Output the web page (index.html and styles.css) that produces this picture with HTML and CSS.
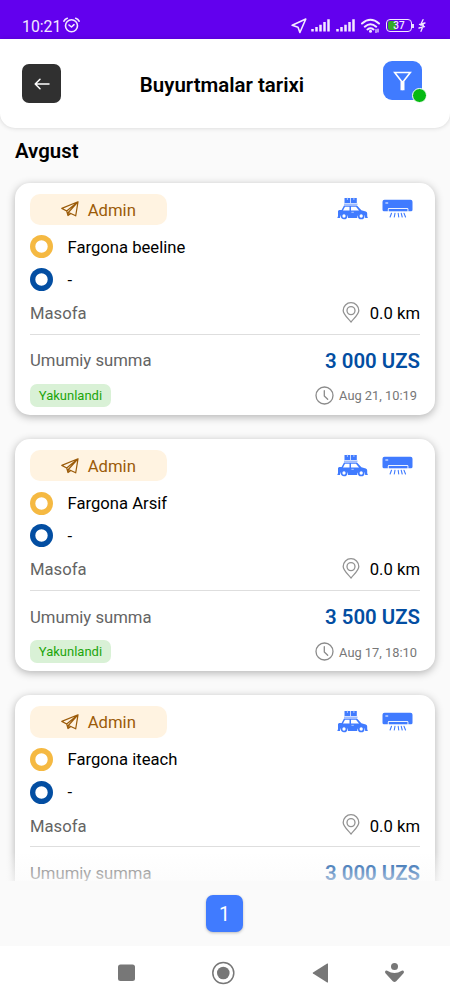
FILE: index.html
```
<!DOCTYPE html>
<html lang="uz">
<head>
<meta charset="utf-8">
<meta name="viewport" content="width=device-width, initial-scale=1">
<title>Buyurtmalar tarixi</title>
<link rel="stylesheet" href="styles.css">
</head>
<body>
<svg class="defs" aria-hidden="true">
  <symbol id="plane" viewBox="0 0 18 16">
    <path d="M.8 7.400 17 .8 14.700 14.800 9.800 12.500 7 14.500 5.700 10ZM17 .8 5.700 10M17 .8 7.300 11.500 7 14.500M7.300 11.500 9.800 12.500"/>
  </symbol>
  <symbol id="car" viewBox="0 0 31 23">
    <path class="solid" d="M7.500 1h5.800v5H7.500ZM14 1h5.800v5H14ZM7 6.800H20.500v.8H7Z"/>
    <path class="solid" fill-rule="evenodd" d="M7 8.500h13l4.400 4.800 4.400 1.200q1.400.5 1.400 2v3.200h.5V21h-2.500a4 4 0 0 0-8 0H11a4 4 0 0 0-8 0H.5v-1.300H1v-5.400q0-1 1.400-1.300h2.200ZM8 9.800l-2 3.600h6.500V9.800Zm6 0v3.600h8L19 9.800Z"/>
    <path class="clasp" d="M10.400 1v1.600M16.900 1v1.600M14.800 15.300h1.600"/>
    <circle class="wheel" cx="7" cy="19" r="2.500"/><circle class="wheel" cx="24.200" cy="19" r="2.500"/>
  </symbol>
  <symbol id="ac" viewBox="0 0 31 20">
    <path class="solid" d="M2.500.8h26q2 0 2 2v8q0 1.500-1.500 1.500h-2.600V10.300q0-1.400-1.400-1.400H7.200Q5.800 8.900 5.800 10.300v2H2Q.5 12.300.5 10.800v-8q0-2 2-2Z"/>
    <path class="solid" d="M6.700 9.900h18.800v2.400H6.700Z"/>
    <path class="cut" d="M3.800 4h2"/>
    <path class="air" d="m9.500 14.200-1.400 3.800M13 14.200l-.7 3.800M16.200 14.200l.5 3.800M19.200 14.200l1 3.800M22 14.200l1.500 3.800"/>
  </symbol>
  <symbol id="pin" viewBox="0 0 18 21">
    <path d="M9 20C6.500 16.600 1.200 12.600 1.200 8.500a7.800 7.800 0 0 1 15.600 0C16.800 12.600 11.500 16.600 9 20Z"/><circle cx="9" cy="8.600" r="4"/>
  </symbol>
  <symbol id="clock" viewBox="0 0 19 19">
    <circle cx="9.500" cy="9.500" r="8.500"/><path d="M9.300 4.700v5.300l3.400 3.300"/>
  </symbol>
  <symbol id="signal" viewBox="0 0 21 15">
    <path d="M1.500 13.500v-2.500M5.500 13.500v-4.500M9.500 13.500V6.700M13.500 13.500V4M17.500 13.500V1.200"/>
  </symbol>
</svg>

<div class="statusbar">
  <span class="time">10:21</span>
  <svg class="alarm" viewBox="0 0 17 16"><circle cx="8.500" cy="8.800" r="6"/><path d="M.9 4.200Q1.900 2 4.300 1.200M16.100 4.200Q15.100 2 12.700 1.200M6 8l2.500 2L11 7.700"/></svg>
  <span class="spacer"></span>
  <svg class="locate" viewBox="0 0 16 16"><path d="M14.800 1 8.900 14.500 7 9.200 1.200 7.300Z"/></svg>
  <svg class="signal"><use href="#signal"/></svg>
  <svg class="signal"><use href="#signal"/></svg>
  <svg class="wifi" viewBox="0 0 20 16"><path d="M1 5.500q8.500-7.500 17 0M3.800 8.700q5.700-5 11.400 0M6.500 11.500q3-2.400 6 0"/><circle cx="9.500" cy="13.300" r="1.500"/><path class="traffic" d="M15 11.500v3M17 11v3"/></svg>
  <span class="battery"><span class="charge"></span><span class="percent">37</span></span>
  <svg class="bolt" viewBox="0 0 8 13"><path d="M5 .7 2.500 6h3L3 12.300M1.500 5.300 7 4M1 9 6.500 7.700"/></svg>
</div>

<header class="appbar">
  <button class="back" aria-label="Orqaga"><svg viewBox="0 0 16 12"><path d="M15 6H1.500M6 1.200 1.200 6 6 10.800"/></svg></button>
  <h1>Buyurtmalar tarixi</h1>
  <button class="filter" aria-label="Filtr"><svg viewBox="0 0 19 20"><path d="M1.700 1.500h15.600L10.700 10v8.500H8.300V10Z"/><path d="M9.500 10.500v8"/></svg><span class="dot"></span></button>
</header>

<main class="list">
  <h2>Avgust</h2>

  <article class="card">
    <div class="top"><span class="chip"><svg><use href="#plane"/></svg>Admin</span><svg class="car"><use href="#car"/></svg><svg class="ac"><use href="#ac"/></svg></div>
    <div class="stop"><i class="ring from"></i>Fargona beeline</div>
    <div class="stop"><i class="ring to"></i>-</div>
    <div class="distance"><span>Masofa</span><svg><use href="#pin"/></svg><b>0.0 km</b></div>
    <div class="total"><span>Umumiy summa</span><strong>3 000 UZS</strong></div>
    <div class="foot"><span class="status">Yakunlandi</span><svg><use href="#clock"/></svg><time>Aug 21, 10:19</time></div>
  </article>

  <article class="card">
    <div class="top"><span class="chip"><svg><use href="#plane"/></svg>Admin</span><svg class="car"><use href="#car"/></svg><svg class="ac"><use href="#ac"/></svg></div>
    <div class="stop"><i class="ring from"></i>Fargona Arsif</div>
    <div class="stop"><i class="ring to"></i>-</div>
    <div class="distance"><span>Masofa</span><svg><use href="#pin"/></svg><b>0.0 km</b></div>
    <div class="total"><span>Umumiy summa</span><strong>3 500 UZS</strong></div>
    <div class="foot"><span class="status">Yakunlandi</span><svg><use href="#clock"/></svg><time>Aug 17, 18:10</time></div>
  </article>

  <article class="card">
    <div class="top"><span class="chip"><svg><use href="#plane"/></svg>Admin</span><svg class="car"><use href="#car"/></svg><svg class="ac"><use href="#ac"/></svg></div>
    <div class="stop"><i class="ring from"></i>Fargona iteach</div>
    <div class="stop"><i class="ring to"></i>-</div>
    <div class="distance"><span>Masofa</span><svg><use href="#pin"/></svg><b>0.0 km</b></div>
    <div class="total"><span>Umumiy summa</span><strong>3 000 UZS</strong></div>
  </article>
  <div class="fade"></div>
</main>

<div class="pager"><button class="page">1</button></div>

<nav class="sysnav">
  <svg viewBox="0 0 450 54">
    <rect x="118" y="18.500" width="17" height="16.500" rx="2.500"/>
    <circle class="outline" cx="223.300" cy="27" r="10.500"/><circle cx="223.300" cy="27" r="6.300"/>
    <path d="M328 18v18q0 .8-.8.4L313 27.600q-.8-.6 0-1.200l14.200-8.800q.8-.4.8.4Z"/>
    <circle cx="394.500" cy="20.500" r="3.500"/>
    <path d="M387.300 24.700q7.200 4.500 14.400 0 1.700-.5 2.200.8.300 1.200-.8 2.300l-6.900 7.500q-1.700 1.500-3.400 0l-6.900-7.500q-1.100-1.100-.8-2.300.5-1.300 2.200-.8Z"/>
  </svg>
</nav>
</body>
</html>
```
FILE: styles.css
```
* { box-sizing: border-box; }

body {
  margin: 0;
  height: 1000px;
  display: flex;
  flex-direction: column;
  overflow: hidden;
  background: #fafafa;
  color: #000;
  font-family: Roboto, sans-serif;
}

svg { display: block; flex: none; fill: none; stroke-linecap: round; stroke-linejoin: round; }
button { border: 0; padding: 0; font: inherit; display: grid; place-items: center; }
h1, h2 { margin: 0; }
.defs { position: absolute; width: 0; height: 0; }

/* Status bar */
.statusbar {
  flex: none;
  height: 39px;
  display: flex;
  align-items: center;
  padding: 12px 24px 0 22px;
  background: #6200ee;
  color: #f3e9ff;
}
.statusbar svg { stroke: #f3e9ff; }
.time { font-size: 15.800px; width: 38px; padding-top: 1px; }
.alarm { width: 17px; height: 16px; margin: -1px 0 0 3px; stroke-width: 1.600; }
.spacer { flex: 1; }
.locate { width: 16px; height: 16px; stroke-width: 1.600; }
.signal { width: 21px; height: 15px; margin-left: 4px; stroke-width: 2.500; stroke-linecap: butt; }
.wifi { width: 20px; height: 16px; margin-left: 4px; stroke-width: 2; }
.wifi circle { fill: #f3e9ff; stroke: none; }
.wifi .traffic { stroke-width: 1.200; }
.battery {
  position: relative;
  width: 26px;
  height: 13px;
  margin: 0 6px 0 5px;
  padding: 1px;
  border: 1px solid #f3e9ff;
  border-radius: 4px;
}
.battery::after {
  content: "";
  position: absolute;
  right: -3px;
  top: 3.500px;
  width: 2px;
  height: 4px;
  background: #e7d9ff;
}
.charge { display: block; width: 8px; height: 100%; border-radius: 2px 0 0 2px; background: #36a829; }
.percent { position: absolute; inset: 0; text-align: center; font-size: 10px; line-height: 12px; font-weight: 500; }
.bolt { width: 8px; height: 13px; stroke-width: 1.300; }

/* App bar */
.appbar {
  position: relative;
  z-index: 2;
  flex: none;
  height: 89px;
  display: flex;
  align-items: center;
  justify-content: space-between;
  padding: 0 28px 0 22px;
  background: #fff;
  border-radius: 0 0 15px 15px;
  box-shadow: 0 0 5px rgba(0, 0, 0, .16);
}
.appbar h1 { font-size: 20.450px; font-weight: 600; line-height: 24px; padding-top: 2px; }
.back { width: 39px; height: 39px; border-radius: 7px; background: #303030; }
.back svg { width: 16px; height: 12px; stroke: #fff; stroke-width: 1.500; }
.filter { position: relative; width: 39px; height: 39px; margin-top: -6px; border-radius: 9px; background: #407bff; }
.filter svg { width: 19px; height: 20px; stroke: #fff; stroke-width: 1.600; stroke-linejoin: miter; }
.dot { position: absolute; right: -5.500px; bottom: -3px; width: 15px; height: 15px; border: 1px solid #fff; border-radius: 50%; background: #06b913; }

/* Order list */
.list {
  position: relative;
  flex: none;
  height: 753px;
  padding: 9px 15px 0;
  overflow: hidden;
}
.list h2 { height: 45.500px; font-size: 20.400px; font-weight: 600; line-height: 28px; }
.card {
  height: 232.500px;
  margin-bottom: 23.800px;
  padding: 11px 15px 0;
  border-radius: 15px;
  background: #fff;
  box-shadow: 0 2px 9px rgba(0, 0, 0, .29);
}
.top { display: flex; align-items: center; height: 31.500px; margin-bottom: 5.500px; }
.chip {
  display: flex;
  align-items: center;
  justify-content: center;
  gap: 9px;
  width: 136.500px;
  height: 31.500px;
  margin-right: auto;
  padding-top: 2px;
  border-radius: 10px;
  background: #fff3e1;
  color: #9b5b09;
  font-size: 16.700px;
}
.chip svg { width: 18px; height: 16px; margin-top: -2px; stroke: #9b5b09; stroke-width: 1.200; }
.solid { fill: #407bff; }
.cut { stroke: #fff; stroke-width: 1; }
.clasp { stroke: #c8d9ff; stroke-width: .8; }
.wheel { fill: #fff; stroke: #407bff; stroke-width: 1.700; }
.air { stroke: #407bff; stroke-width: 1.100; }
.car { width: 31px; height: 23px; margin-top: -1px; }
.ac { width: 31px; height: 20px; margin: 0 7px 0 14px; }

.stop { display: flex; align-items: center; gap: 14.500px; height: 32.700px; padding-top: 1px; font-size: 16.650px; }
.ring { width: 23px; height: 23px; margin-top: -1px; border-radius: 50%; box-shadow: inset 0 0 0 5.300px currentColor; }
.from { color: #f5b942; }
.to { color: #034ea2; }

.distance {
  display: flex;
  align-items: center;
  height: 39px;
  padding-bottom: 2.500px;
  border-bottom: 1px solid #dedede;
  color: #646464;
  font-size: 16.650px;
}
.distance svg { width: 18px; height: 21px; margin: -3px 10px 0 auto; stroke: #929292; stroke-width: 1.300; }
.distance b { font-weight: 400; color: #000; }
.total { display: flex; align-items: center; justify-content: space-between; height: 49px; padding-top: 3px; color: #646464; font-size: 16.700px; }
.total strong { color: #034ea2; font-size: 20.400px; font-weight: 600; }
.foot { display: flex; align-items: center; height: 23px; color: #777; font-size: 12.850px; }
.status { width: 81px; height: 23px; border-radius: 7px; background: #d9f1d6; color: #1ca50b; font-size: 13px; text-align: center; line-height: 24px; }
.foot svg { width: 19px; height: 19px; margin: 0 5px 0 auto; stroke: #8b8b8b; stroke-width: 1.300; }
.foot time { padding: 1px 3px 0 0; }
.fade {
  position: absolute;
  left: 0;
  right: 0;
  bottom: 0;
  height: 29px;
  background: linear-gradient(rgba(250, 250, 250, 0), rgba(250, 250, 250, .65));
}

/* Pagination */
.pager { flex: none; height: 65px; display: flex; justify-content: center; align-items: flex-start; padding: 14px 1px 0 0; }
.page { width: 37px; height: 37px; padding-top: 1px; border-radius: 7px; background: #407bff; color: #fff; font-size: 19.500px; box-shadow: 0 1px 3px rgba(0, 0, 0, .25); }

/* System navigation */
.sysnav { flex: none; height: 54px; background: #fff; }
.sysnav svg { width: 450px; height: 54px; fill: #777; }
.sysnav .outline { fill: none; stroke: #777; stroke-width: 1.500; }
```
